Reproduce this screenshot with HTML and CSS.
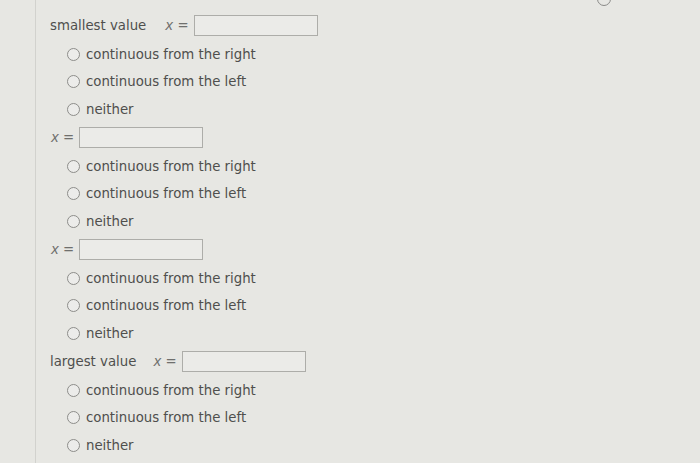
FILE: index.html
```html
<!DOCTYPE html>
<html>
<head>
<meta charset="utf-8">
<link rel="stylesheet" href="styles.css">
</head>
<body>
<div class="page">
  <div class="topicon"></div>
  <div class="content">
    <div class="group">
      <div class="inrow"><span class="label">smallest value</span><span class="eq"><i>x</i> =</span><span class="box"></span></div>
      <div class="radio"><span class="circle"></span><span class="opt">continuous from the right</span></div>
      <div class="radio"><span class="circle"></span><span class="opt">continuous from the left</span></div>
      <div class="radio"><span class="circle"></span><span class="opt">neither</span></div>
    </div>
    <div class="group">
      <div class="inrow"><span class="eq eq-solo"><i>x</i> =</span><span class="box"></span></div>
      <div class="radio"><span class="circle"></span><span class="opt">continuous from the right</span></div>
      <div class="radio"><span class="circle"></span><span class="opt">continuous from the left</span></div>
      <div class="radio"><span class="circle"></span><span class="opt">neither</span></div>
    </div>
    <div class="group">
      <div class="inrow"><span class="eq eq-solo"><i>x</i> =</span><span class="box"></span></div>
      <div class="radio"><span class="circle"></span><span class="opt">continuous from the right</span></div>
      <div class="radio"><span class="circle"></span><span class="opt">continuous from the left</span></div>
      <div class="radio"><span class="circle"></span><span class="opt">neither</span></div>
    </div>
    <div class="group">
      <div class="inrow"><span class="label label-l">largest value</span><span class="eq"><i>x</i> =</span><span class="box"></span></div>
      <div class="radio"><span class="circle"></span><span class="opt">continuous from the right</span></div>
      <div class="radio"><span class="circle"></span><span class="opt">continuous from the left</span></div>
      <div class="radio"><span class="circle"></span><span class="opt">neither</span></div>
    </div>
  </div>
</div>
</body>
</html>
```

FILE: styles.css
```css
html, body {
  margin: 0;
  padding: 0;
}
body {
  background: #e7e7e3;
  font-family: "DejaVu Sans", Verdana, sans-serif;
  font-size: 13.3px;
  color: #4f4f4d;
  width: 700px;
  height: 463px;
  overflow: hidden;
}
.page {
  position: relative;
  height: 463px;
  margin-left: 35px;
  border-left: 1px solid #d2d2ce;
}
.topicon {
  position: absolute;
  left: 561px;
  top: -8px;
  width: 12px;
  height: 12px;
  border: 1.5px solid #8a8a88;
  border-radius: 50%;
}
.content {
  padding-top: 11px;
  padding-left: 14px;
}
.inrow {
  height: 29.5px;
  display: flex;
  align-items: center;
}
.label {
  margin-right: 19px;
}
.label-l {
  margin-right: 17px;
}
.eq {
  color: #6f6f6d;
  margin-right: 5px;
}
.eq-solo {
  margin-left: 1px;
}
.eq i {
  font-style: italic;
}
.box {
  width: 122px;
  height: 19px;
  border: 1px solid #adada9;
  background: #ebebe8;
  box-sizing: content-box;
}
.radio {
  height: 27.5px;
  display: flex;
  align-items: center;
  padding-left: 17px;
}
.circle {
  width: 11px;
  height: 11px;
  border: 1.5px solid #8d8d8a;
  border-radius: 50%;
  background: #ececea;
  margin-right: 6px;
  flex: none;
}
.opt {
  color: #4f4f4d;
}
```
